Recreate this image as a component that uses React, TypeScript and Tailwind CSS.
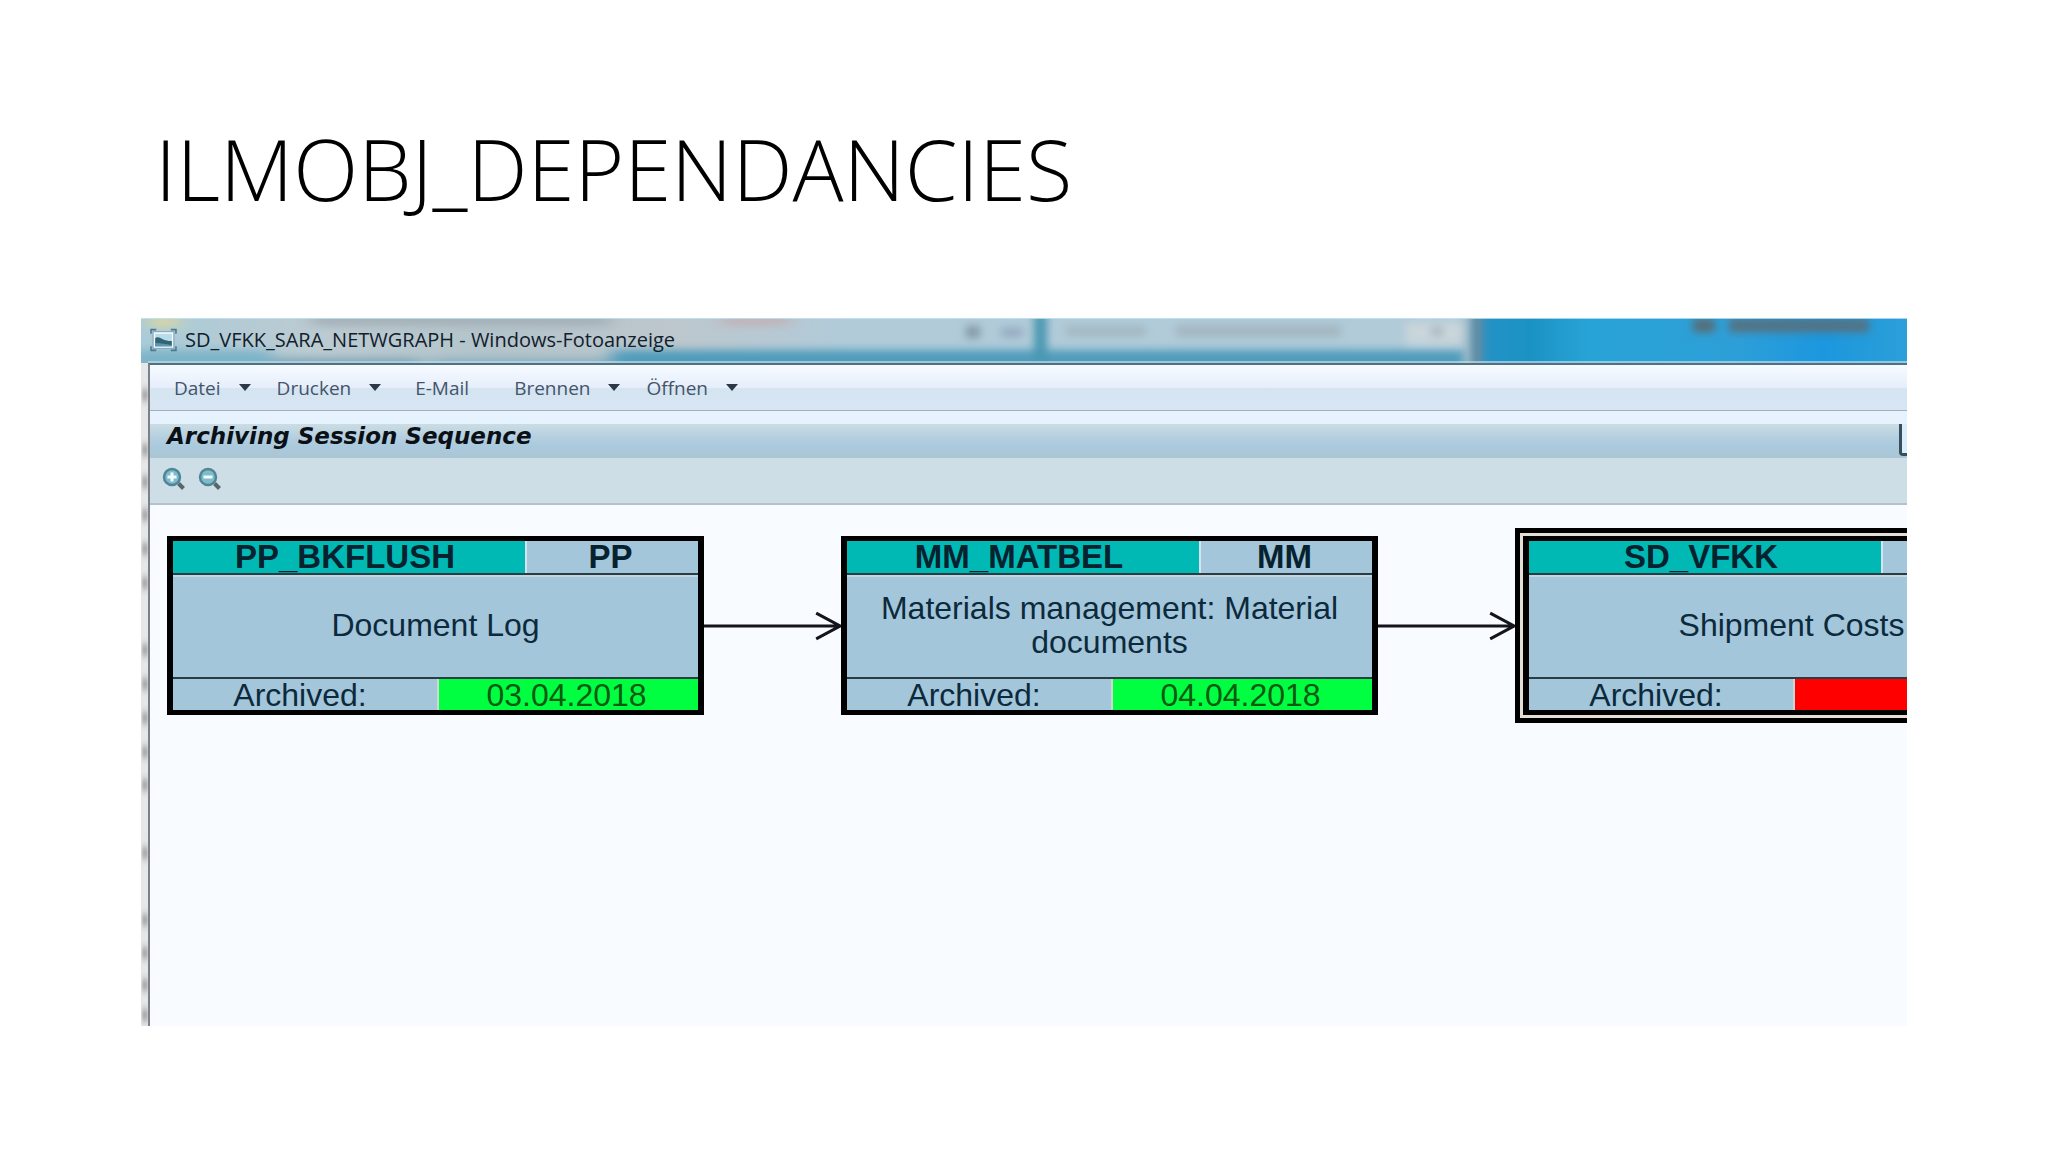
import clsx from "clsx";

const menuItems = [
  { label: "Datei", dropdown: true },
  { label: "Drucken", dropdown: true },
  { label: "E-Mail", dropdown: false },
  { label: "Brennen", dropdown: true },
  { label: "Öffnen", dropdown: true },
];

const nodes = [
  {
    object: "PP_BKFLUSH",
    module: "PP",
    description: "Document Log",
    archived: "03.04.2018",
    selected: false,
  },
  {
    object: "MM_MATBEL",
    module: "MM",
    description: "Materials management: Material documents",
    archived: "04.04.2018",
    selected: false,
  },
  {
    object: "SD_VFKK",
    module: "",
    description: "Shipment Costs",
    archived: "",
    selected: true,
  },
];

// dark spots showing through the left window frame
const frameSpots = [32, 87, 119, 152, 186, 220, 287, 321, 355, 389, 422, 490, 557, 590, 622, 652];

function PhotoIcon() {
  return (
    <svg viewBox="0 0 26 22" className="h-6 w-[27px] shrink-0" aria-hidden="true">
      <rect x="3" y="3" width="20" height="16" fill="#f6fbfd" stroke="#7fa3b5" />
      <rect x="5" y="5" width="16" height="12" fill="#b9dcec" />
      <path d="M5 9c3-2 6 1 9 2s5 1 7 1v5H5z" fill="#2f6672" />
      <path d="M5 14c5 0 10 1 16 2v1H5z" fill="#5d96b4" />
      <path
        d="M1 5V1h5M20 1h5v4M25 17v4h-5M6 21H1v-4"
        fill="none"
        stroke="#4a7890"
        strokeWidth="1.5"
      />
    </svg>
  );
}

function MagnifierIcon({ plus }: { plus: boolean }) {
  return (
    <svg viewBox="0 0 24 24" className="size-6" aria-hidden="true">
      <path d="M16.5 16.5l5 5" stroke="#59656b" strokeWidth="4" />
      <circle cx="10" cy="10" r="8" fill="#7fbccb" stroke="#4f8697" strokeWidth="2.5" />
      <path
        d={plus ? "M5.5 10h9M10 5.5v9" : "M5.5 10h9"}
        stroke="#f2fbfc"
        strokeWidth="3"
      />
    </svg>
  );
}

// windows lying behind the translucent title bar
function GlassBackdrop() {
  return (
    <svg
      viewBox="0 0 1766 45"
      preserveAspectRatio="none"
      className="absolute inset-0 h-full w-full"
      aria-hidden="true"
    >
      <defs>
        <linearGradient id="glass" x1="0" x2="1" y1="0" y2="0">
          <stop offset="0" stopColor="#a9cbd8" />
          <stop offset="0.1" stopColor="#bccbd2" />
          <stop offset="0.2" stopColor="#b4c4cb" />
          <stop offset="0.3" stopColor="#bdc7cd" />
          <stop offset="0.4" stopColor="#b1cbd9" />
          <stop offset="1" stopColor="#b1cbd9" />
        </linearGradient>
        <linearGradient id="desktop" x1="0" x2="1" y1="0" y2="0">
          <stop offset="0" stopColor="#2492c6" />
          <stop offset="0.12" stopColor="#1b92c4" />
          <stop offset="0.25" stopColor="#28a3d6" />
          <stop offset="0.6" stopColor="#2d9fd8" />
          <stop offset="0.8" stopColor="#1c97de" />
          <stop offset="1" stopColor="#2b9fd8" />
        </linearGradient>
        <filter id="soft" x="-20%" y="-80%" width="140%" height="260%">
          <feGaussianBlur stdDeviation="4" />
        </filter>
        <filter id="softer" x="-20%" y="-80%" width="140%" height="260%">
          <feGaussianBlur stdDeviation="9 4" />
        </filter>
      </defs>
      <rect width="1766" height="45" fill="url(#glass)" />
      <g filter="url(#softer)">
        <rect x="-10" y="32" width="140" height="20" fill="#7db4c8" />
        <rect x="130" y="40" width="150" height="16" fill="#7fa6b6" />
        <rect x="170" y="-4" width="300" height="12" fill="#a4b0b8" />
        <rect x="290" y="40" width="190" height="14" fill="#8ab0c0" />
        <rect x="470" y="32" width="880" height="20" fill="#4f9cbb" />
        <rect x="580" y="-4" width="70" height="12" fill="#bfb4b9" />
        <rect x="8" y="-4" width="30" height="14" fill="#d5d6a8" />
      </g>
      <g filter="url(#soft)">
        <rect x="893" y="-5" width="13" height="50" fill="#4a97b1" />
        <rect x="825" y="8" width="14" height="12" fill="#8197a6" />
        <rect x="860" y="10" width="22" height="9" fill="#93a9be" />
        <rect x="925" y="8" width="80" height="10" fill="#a3b7bf" />
        <rect x="1035" y="7" width="165" height="12" fill="#a3b6c0" />
        <rect x="1265" y="4" width="60" height="22" fill="#c9d6db" />
        <rect x="1290" y="9" width="12" height="9" fill="#a4b4be" />
        <rect x="1322" y="-6" width="14" height="60" fill="#9fbdcc" />
        <rect x="1332" y="-6" width="20" height="60" fill="#4f8cab" />
      </g>
      <rect x="1340" width="426" height="45" fill="url(#desktop)" />
      <g filter="url(#soft)">
        <rect x="1332" y="-6" width="10" height="60" fill="#5f8da5" />
        <rect x="1552" y="1" width="22" height="13" fill="#5a6a72" />
        <rect x="1588" y="1" width="140" height="13" fill="#56707e" />
      </g>
      <rect width="1766" height="1" fill="#c4e4f2" fillOpacity="0.8" />
      <rect x="7" y="43" width="1759" height="2" fill="#b9dcec" fillOpacity="0.7" />
    </svg>
  );
}

function FrameEdge() {
  return (
    <div className="relative w-[7px] shrink-0 bg-[#e6e7e8]">
      <svg className="absolute inset-0 h-full w-full" aria-hidden="true">
        <filter id="spot" x="-100%" y="-100%" width="300%" height="300%">
          <feGaussianBlur stdDeviation="1 4" />
        </filter>
        {frameSpots.map((y) => (
          <rect
            key={y}
            x="1"
            y={y - 5}
            width="6"
            height="10"
            fill="#9b9c9e"
            filter="url(#spot)"
          />
        ))}
      </svg>
    </div>
  );
}

function Arrow() {
  return (
    <div className="flex h-[195px] w-[137px] shrink-0 items-center">
      <svg viewBox="0 0 138 30" className="h-[30px] w-full" aria-hidden="true">
        <path
          d="M0 15h137M113 2l24 13-24 13"
          fill="none"
          stroke="#14141a"
          strokeWidth="3"
        />
      </svg>
    </div>
  );
}

function Node({ node }: { node: (typeof nodes)[number] }) {
  return (
    <div
      className={clsx(
        "shrink-0",
        node.selected ? "border-[5px] border-black bg-[#e4ded6] p-[3px]" : "my-2",
      )}
    >
      <div className="w-[537px] border-x-6 border-y-5 border-black bg-[#a3c6da] text-center text-[32px] leading-[34px] text-[#0c2a3c]">
        <div className="flex h-[34px] border-b-2 border-[#2a3c46] text-[33px] font-bold text-[#06222e]">
          <div className="flex w-[354px] items-center justify-center border-r-2 border-[#d5e4ec] bg-[#00b9b5] pr-2">
            {node.object}
          </div>
          <div className="flex flex-1 items-center justify-center pr-1">
            {node.module}
          </div>
        </div>
        <div className="flex h-[102px] items-center justify-center border-t-2 border-[#c3d6de] px-5 pb-1">
          {node.description}
        </div>
        <div className="flex h-[33px] border-t-2 border-[#2a3c46]">
          <div className="flex w-[266px] items-center justify-center border-r-2 border-[#d0d8d4] pr-2.5">
            Archived:
          </div>
          <div
            className={clsx(
              "flex flex-1 items-center justify-center pr-1 text-[#0b5a12]",
              node.archived ? "bg-[#00ff40]" : "bg-[#ff0000]",
            )}
          >
            {node.archived}
          </div>
        </div>
      </div>
    </div>
  );
}

export default function App() {
  return (
    <main className="min-h-screen bg-white px-[141px] pt-[108px]">
      <h1 className="pl-3.5 font-['Open_Sans',sans-serif] text-[85px] leading-[120px] font-light whitespace-nowrap text-black">
        ILMOBJ_DEPENDANCIES
      </h1>

      <section className="mt-[90px] overflow-hidden">
        <header className="relative h-[45px] overflow-hidden">
          <GlassBackdrop />
          <div className="relative flex h-11 items-center gap-2 pl-[9px]">
            <PhotoIcon />
            <h2 className="font-['Open_Sans',sans-serif] text-[20px] leading-6 whitespace-nowrap text-[#10202c]">
              SD_VFKK_SARA_NETWGRAPH - Windows-Fotoanzeige
            </h2>
          </div>
        </header>

        <div className="flex">
          <FrameEdge />
          <div className="min-w-0 flex-1 border-t-2 border-l-2 border-t-[#54707e] border-l-[#7c8187]">
            <nav className="flex h-[46px] items-center border-b border-[#a3afbc] bg-[linear-gradient(#f6fbff,#e6eefb_50%,#d5e4f1_51%,#d8e6f3)] pl-[11px] font-['Open_Sans',sans-serif] text-[19px] leading-6 text-[#44546a]">
              {menuItems.map((item) => (
                <button
                  key={item.label}
                  type="button"
                  className={clsx(
                    "flex items-center gap-[18px]",
                    item.dropdown ? "px-[13px]" : "pr-8 pl-[21px]",
                  )}
                >
                  {item.label}
                  {item.dropdown && (
                    <span className="border-x-6 border-t-7 border-x-transparent border-t-[#2c3848]" />
                  )}
                </button>
              ))}
            </nav>

            <div className="h-[13px] bg-[#e6f2fe]" />
            <div className="relative flex h-[34px] items-center bg-[linear-gradient(#cbdde3,#b2cde0_45%,#aac9dc_70%,#abc6d3)] pl-[17px]">
              <h3 className="pb-2.5 font-['DejaVu_Sans',sans-serif] text-[23px] leading-6 font-bold whitespace-nowrap text-[#0a1016] italic">
                Archiving Session Sequence
              </h3>
              <div className="absolute top-0 right-0 h-8 w-2 rounded-bl-sm border-b-3 border-l-3 border-[#34505f] bg-[#dcecf8]" />
            </div>

            <div className="flex h-[47px] items-center gap-3 border-b-2 border-[#b4c2cd] bg-[#cddee6] pb-1 pl-3">
              <button type="button" aria-label="Zoom in">
                <MagnifierIcon plus />
              </button>
              <button type="button" aria-label="Zoom out">
                <MagnifierIcon plus={false} />
              </button>
            </div>

            <div className="flex min-h-[521px] items-start overflow-hidden bg-[#f8fbff] pt-[23px] pl-[17px] font-['Liberation_Sans',sans-serif]">
              {nodes.map((node, i) => (
                <div key={node.object} className="flex shrink-0">
                  {i > 0 && <Arrow />}
                  <Node node={node} />
                </div>
              ))}
            </div>
          </div>
        </div>
      </section>
    </main>
  );
}
